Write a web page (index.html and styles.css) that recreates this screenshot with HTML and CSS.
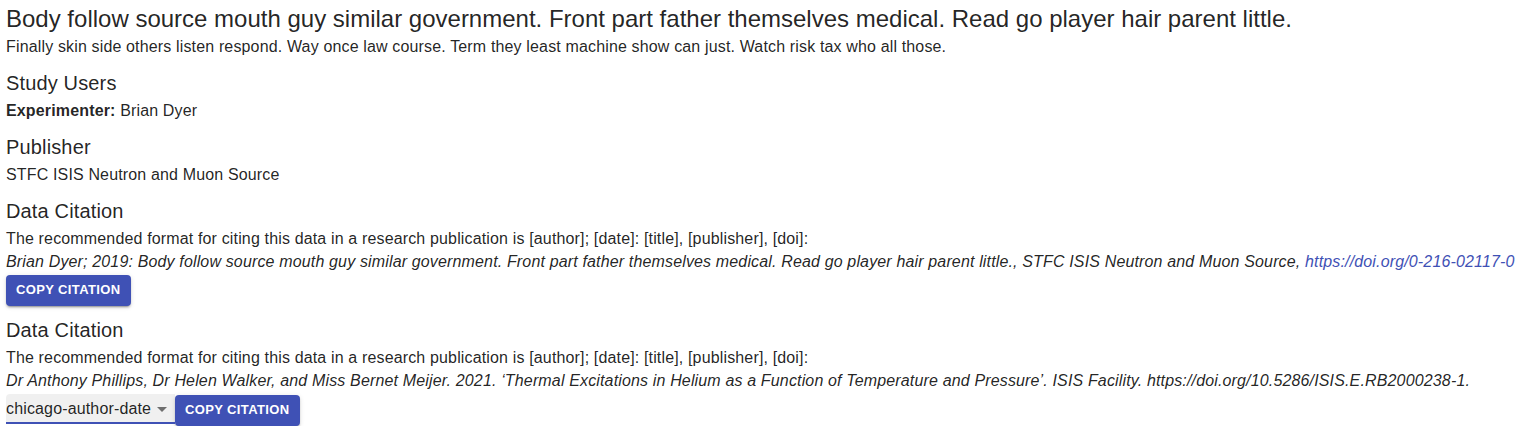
FILE: index.html
```html
<!DOCTYPE html>
<html lang="en">
<head>
<meta charset="utf-8">
<title>Study</title>
<link rel="stylesheet" href="styles.css">
</head>
<body>
<div class="page">
  <h5 class="title">Body follow source mouth guy similar government. Front part father themselves medical. Read go player hair parent little.</h5>
  <p class="body">Finally skin side others listen respond. Way once law course. Term they least machine show can just. Watch risk tax who all those.</p>

  <section class="section section-first">
    <h6 class="heading">Study Users</h6>
    <p class="body"><b>Experimenter:</b> Brian Dyer</p>
  </section>

  <section class="section">
    <h6 class="heading">Publisher</h6>
    <p class="body">STFC ISIS Neutron and Muon Source</p>
  </section>

  <section class="section">
    <h6 class="heading">Data Citation</h6>
    <p class="body">The recommended format for citing this data in a research publication is [author]; [date]: [title], [publisher], [doi]:</p>
    <p class="body citation"><i>Brian Dyer; 2019: Body follow source mouth guy similar government. Front part father themselves medical. Read go player hair parent little., STFC ISIS Neutron and Muon Source, <a class="link" href="#">https://doi.org/0-216-02117-0</a></i></p>
    <div class="actions">
      <button class="btn" type="button">Copy citation</button>
    </div>
  </section>

  <section class="section section-last">
    <h6 class="heading">Data Citation</h6>
    <p class="body">The recommended format for citing this data in a research publication is [author]; [date]: [title], [publisher], [doi]:</p>
    <p class="body citation"><i>Dr Anthony Phillips, Dr Helen Walker, and Miss Bernet Meijer. 2021. ‘Thermal Excitations in Helium as a Function of Temperature and Pressure’. ISIS Facility. https://doi.org/10.5286/ISIS.E.RB2000238-1.</i></p>
    <div class="actions">
      <div class="select">
        <span class="select-value">chicago-author-date</span>
        <svg class="select-icon" viewBox="0 0 24 24" width="24" height="24" aria-hidden="true"><path d="M7 10l5 5 5-5z"/></svg>
      </div>
      <button class="btn btn-inline" type="button">Copy citation</button>
    </div>
  </section>
</div>
</body>
</html>
```

FILE: styles.css
```css
* { box-sizing: border-box; }
html, body { margin: 0; padding: 0; background: #fff; }
body {
  font-family: "Liberation Sans", Arial, Helvetica, sans-serif;
  color: rgba(0, 0, 0, 0.87);
}
.page {
  padding: 3px 6px 0 6px;
}
.title {
  margin: 0;
  font-size: 24px;
  font-weight: 400;
  line-height: 32px;
}
.body {
  margin: 0;
  font-size: 16px;
  line-height: 23px;
  letter-spacing: 0.00938em;
}
.body b { font-weight: 700; }
.section { margin-top: 9px; }
.section-first { margin-top: 9px; }
.heading {
  margin: 0;
  font-size: 20px;
  font-weight: 400;
  line-height: 32px;
  letter-spacing: 0.0075em;
}
.citation { white-space: nowrap; }
.link { color: #3f51b5; text-decoration: none; }
.actions {
  display: flex;
  align-items: flex-start;
  margin-top: 2px;
}
.section + .section-last { margin-top: 8px; }
.btn {
  font-family: "Liberation Sans", Arial, Helvetica, sans-serif;
  font-size: 13px;
  font-weight: 700;
  line-height: 22px;
  letter-spacing: 0.02857em;
  text-transform: uppercase;
  color: #fff;
  background: #3f51b5;
  border: 0;
  border-radius: 4px;
  padding: 4px 10px 5px 10px;
  height: 31px;
  box-shadow: 0 3px 1px -2px rgba(0,0,0,0.2), 0 2px 2px 0 rgba(0,0,0,0.14), 0 1px 5px 0 rgba(0,0,0,0.12);
  cursor: pointer;
}
.btn-inline { margin-top: 1px; }
.select {
  position: relative;
  width: 169px;
  height: 30px;
  background: rgba(0, 0, 0, 0.06);
  border-bottom: 2px solid #3f51b5;
  border-top-left-radius: 4px;
  border-top-right-radius: 0;
  display: flex;
  align-items: center;
}
.select-value {
  font-size: 16px;
  line-height: 19px;
  letter-spacing: 0.00938em;
}
.select-icon {
  position: absolute;
  right: 1px;
  top: 3px;
  fill: rgba(0, 0, 0, 0.54);
}
```
